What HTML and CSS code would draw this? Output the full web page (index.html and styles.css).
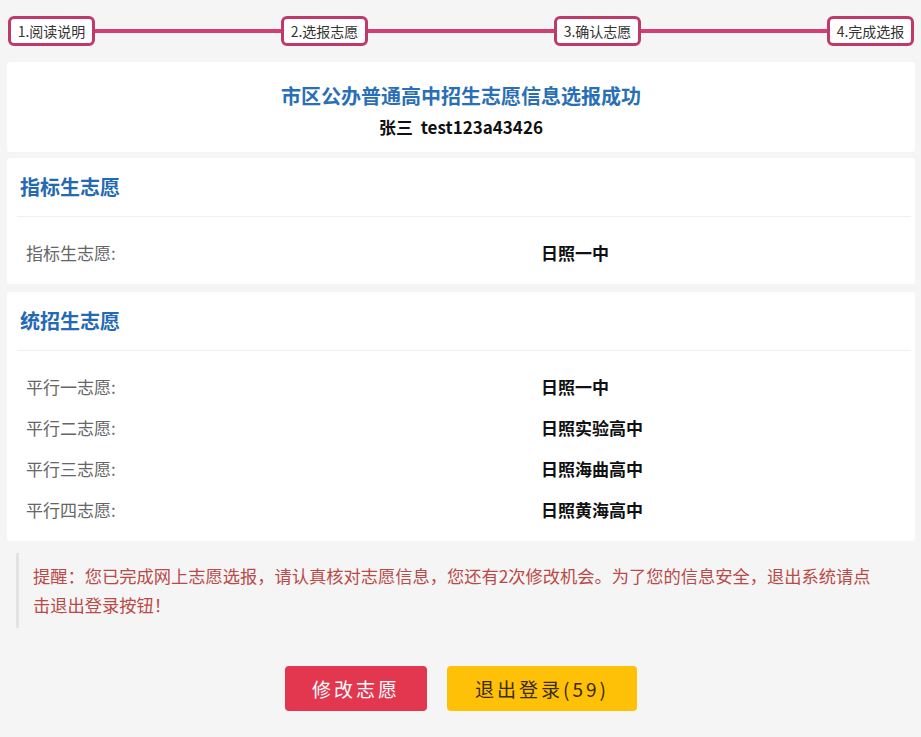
FILE: index.html
```html
<!DOCTYPE html>
<html>
<head>
  <meta charset="utf-8">
  <title>志愿选报成功</title>
  <link rel="stylesheet" href="styles.css">
</head>
<body>

<div class="steps">
  <div class="step">1.阅读说明</div>
  <div class="step-line"></div>
  <div class="step">2.选报志愿</div>
  <div class="step-line"></div>
  <div class="step">3.确认志愿</div>
  <div class="step-line"></div>
  <div class="step">4.完成选报</div>
</div>

<div class="wrap">
  <div class="card card-top">
    <div class="result-title">市区公办普通高中招生志愿信息选报成功</div>
    <div class="result-name">张三&nbsp;&nbsp;test123a43426</div>
  </div>

  <div class="card">
    <div class="card-head">指标生志愿</div>
    <div class="card-body">
      <div class="row">
        <span class="label">指标生志愿:</span>
        <span class="value">日照一中</span>
      </div>
    </div>
  </div>

  <div class="card">
    <div class="card-head">统招生志愿</div>
    <div class="card-body">
      <div class="row">
        <span class="label">平行一志愿:</span>
        <span class="value">日照一中</span>
      </div>
      <div class="row">
        <span class="label">平行二志愿:</span>
        <span class="value">日照实验高中</span>
      </div>
      <div class="row">
        <span class="label">平行三志愿:</span>
        <span class="value">日照海曲高中</span>
      </div>
      <div class="row">
        <span class="label">平行四志愿:</span>
        <span class="value">日照黄海高中</span>
      </div>
    </div>
  </div>

  <blockquote class="notice">
    提醒：您已完成网上志愿选报，请认真核对志愿信息，您还有2次修改机会。为了您的信息安全，退出系统请点击退出登录按钮！
  </blockquote>

  <div class="actions">
    <button class="btn btn-red">修改志愿</button>
    <button class="btn btn-yellow">退出登录(59)</button>
  </div>
</div>

</body>
</html>
```

FILE: styles.css
```css
body {
  margin: 0;
  background-color: #f5f5f5;
  font-family: "Noto Sans CJK SC", "Microsoft YaHei", sans-serif;
  color: #333;
}
.steps {
  display: flex;
  align-items: center;
  height: 62px;
  padding: 0 7px 0 8px;
  box-sizing: border-box;
}
.step {
  width: 87px;
  height: 30px;
  box-sizing: border-box;
  border: 3px solid #bf3a6a;
  border-radius: 6px;
  background-color: #fff;
  font-size: 14px;
  line-height: 24px;
  text-align: center;
  color: #333;
}
.step-line {
  flex: 1;
  height: 4px;
  background-color: #d23f74;
}
.wrap {
  padding: 0 6px 0 7px;
}
.card {
  background-color: #fff;
  border-radius: 3px;
  padding: 0 4px 0 10px;
  margin-bottom: 8px;
}
.card-top {
  padding: 18px 0 10px;
  margin-bottom: 6px;
  text-align: center;
}
.result-title {
  font-size: 20px;
  font-weight: bold;
  line-height: 32px;
  color: #2a6fb6;
}
.result-name {
  font-size: 17px;
  font-weight: bold;
  line-height: 30px;
  color: #111;
}
.card-head {
  height: 58px;
  line-height: 58px;
  border-bottom: 1px solid #f0f0f0;
  font-size: 20px;
  font-weight: bold;
  color: #2469b3;
  padding-left: 3px;
}
.card-body {
  padding: 15px 0 11px;
}
.row {
  display: grid;
  grid-template-columns: 515px 1fr;
  padding-left: 9px;
  line-height: 41px;
  font-size: 17px;
}
.label {
  color: #666;
}
.value {
  font-weight: bold;
  color: #111;
}
.notice {
  margin: 12px 40px 0 9px;
  padding: 8px 0 9px 14px;
  border-left: 3px solid #e3e3e3;
  font-size: 17.25px;
  line-height: 29px;
  color: #b94a48;
}
.actions {
  display: flex;
  justify-content: center;
  gap: 20px;
  margin-top: 38px;
}
.btn {
  height: 45px;
  border: 0;
  border-radius: 4px;
  font-family: inherit;
  font-size: 19px;
  letter-spacing: 3px;
}
.btn-red {
  width: 142px;
  background-color: #e2374f;
  color: #fff;
}
.btn-yellow {
  width: 190px;
  background-color: #ffc107;
  color: #3a2a00;
}
```
